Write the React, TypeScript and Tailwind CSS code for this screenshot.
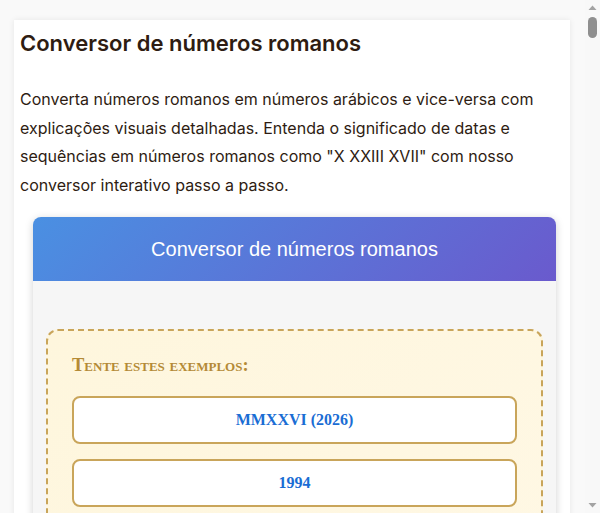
import React from 'react';

const examples = ['MMXXVI (2026)', '1994', 'X XXIII XVII', 'MCMLXXXIV', '3999', 'XLII'];

const ScrollbarGutter: React.FC = () => (
    <div className="w-[15px] h-full shrink-0 bg-[#f8f8f8] flex flex-col items-center">
        <svg width="15" height="15" viewBox="0 0 15 15" className="shrink-0">
            <path d="M3.5 10 L7.5 5.5 L11.5 10 Z" fill="#a3a3a3" />
        </svg>
        <div className="mt-[2px] w-[9px] h-[21px] rounded-full bg-[#8f8f8f]" />
        <div className="flex-1" />
        <svg width="15" height="15" viewBox="0 0 15 15" className="shrink-0">
            <path d="M3.5 5 L7.5 9.5 L11.5 5 Z" fill="#a3a3a3" />
        </svg>
    </div>
);

const App: React.FC = () => {
    return (
        <div className="h-screen flex bg-[#f9f9f9] font-['Inter',sans-serif]">
            <main className="flex-1 h-full overflow-y-auto">
                <div className="pl-[14px] pr-[15px] pt-[20px] pb-10">
                    <div className="bg-white shadow-[0_0_6px_rgba(0,0,0,0.08)] pl-[6px] pr-[14px] pt-[9px] pb-8">
                        {/* Title */}
                        <h1 className="text-[22px] leading-[28px] font-semibold text-[#2e1c12]">
                            Conversor de números romanos
                        </h1>
                        <p className="mt-[28px] text-[16px] leading-[28.5px] text-[#2e1c12]">
                            Converta números romanos em números arábicos e vice-versa com explicações visuais detalhadas. Entenda o significado de datas e sequências em números romanos como "X XXIII XVII" com nosso conversor interativo passo a passo.
                        </p>

                        {/* Converter */}
                        <div className="mt-[18px] ml-[13px] rounded-lg overflow-hidden bg-[#f6f6f6] shadow-[0_2px_8px_rgba(0,0,0,0.18)]">
                            <div className="h-[64px] flex items-center justify-center bg-[linear-gradient(135deg,#4a90e2_0%,#6a5acd_100%)]">
                                <h2 className="text-white text-[20px] font-['Liberation_Sans',Arial,sans-serif]">
                                    Conversor de números romanos
                                </h2>
                            </div>
                            <div className="px-[13px] pt-[48px] pb-8">
                                <div className="rounded-[12px] border-2 border-dashed border-[#c9a55a] bg-[linear-gradient(135deg,#fef6dd,#fff8e6)] px-[24px] pt-[22px] pb-[24px]">
                                    <h3 className="text-[#b48a36] text-[18.5px] font-bold [font-variant:small-caps] font-['Liberation_Serif',serif] leading-[24px]">
                                        Tente estes exemplos:
                                    </h3>
                                    <div className="mt-[19px] flex flex-col gap-[15px]">
                                        {examples.map(ex => (
                                            <button
                                                key={ex}
                                                className="h-[48px] w-full rounded-lg border-2 border-[#c9a55a] bg-white text-[#1a6dd4] text-[16px] font-semibold font-['Liberation_Serif',serif] [font-variant:small-caps]"
                                            >
                                                {ex}
                                            </button>
                                        ))}
                                    </div>
                                </div>

                                <div className="mt-8 space-y-4">
                                    <label className="block text-sm text-gray-700">Digite um número romano ou arábico</label>
                                    <input className="w-full h-12 rounded-lg border border-gray-300 bg-white px-4" />
                                    <button className="w-full h-12 rounded-lg bg-[#4a90e2] text-white font-medium">Converter</button>
                                </div>
                                <div className="mt-8 h-[6000px] rounded-lg bg-white border border-gray-200" />
                            </div>
                        </div>
                    </div>
                </div>
            </main>
            <ScrollbarGutter />
        </div>
    );
};

export default App;
